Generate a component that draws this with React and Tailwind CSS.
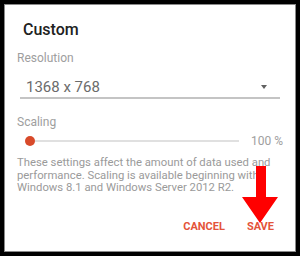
import React from "react";

const Arrow = () => (
  <svg
    className="absolute left-[242px] top-[166px]"
    width="36"
    height="57"
    viewBox="0 0 36 57"
  >
    <path d="M14 0 H24 V31 H36 L18 57 L0 31 H14 Z" fill="#ff0000" />
  </svg>
);

const App = () => {
  return (
    <div className="relative w-[300px] h-[256px] bg-black p-[4px] font-['Roboto',sans-serif]">
      <div className="h-full border border-[#8a8a8a] bg-white flex flex-col pt-[15px] px-[12px]">
        {/* Title */}
        <h2 className="pl-[6px] text-[16px] leading-[20px] font-medium text-[#212121]">
          Custom
        </h2>

        {/* Resolution */}
        <p className="mt-[10px] text-[12px] leading-[16px] text-[#9e9e9e]">
          Resolution
        </p>
        <div className="mt-[11px] mx-[3px] h-[22px] border-b-2 border-[#c4c4c4] flex justify-between pl-[6px] pr-[13px]">
          <span className="text-[15px] leading-[20px] text-[#6b6b6b]">
            1368 x 768
          </span>
          <span className="mt-[8px] w-0 h-0 border-l-[3.5px] border-r-[3.5px] border-t-[4px] border-l-transparent border-r-transparent border-t-[#616161]" />
        </div>

        {/* Scaling */}
        <p className="mt-[15px] text-[12px] leading-[16px] text-[#9e9e9e]">
          Scaling
        </p>
        <div className="mt-[4px] h-[13px] flex items-center">
          <span className="ml-[8px] w-[10px] h-[10px] rounded-full bg-[#d84a2a] shrink-0" />
          <span className="flex-1 h-[2px] bg-[#e0e0e0]" />
          <span className="ml-[12px] text-[12px] leading-[16px] text-[#9e9e9e]">
            100 %
          </span>
        </div>

        <p className="mt-[10px] text-[11.3px] leading-[12.5px] text-[#9a9a9a]">
          These settings affect the amount of data used and performance.
          Scaling is available beginning with Windows 8.1 and Windows Server
          2012 R2.
        </p>

        {/* Actions */}
        <div className="mt-[25px] flex justify-end gap-[22px] pr-[9px]">
          <button className="text-[11px] leading-[14px] font-bold text-[#e4543a]">
            CANCEL
          </button>
          <button className="text-[11px] leading-[14px] font-bold text-[#e4543a]">
            SAVE
          </button>
        </div>
      </div>
      <Arrow />
    </div>
  );
};

export default App;
